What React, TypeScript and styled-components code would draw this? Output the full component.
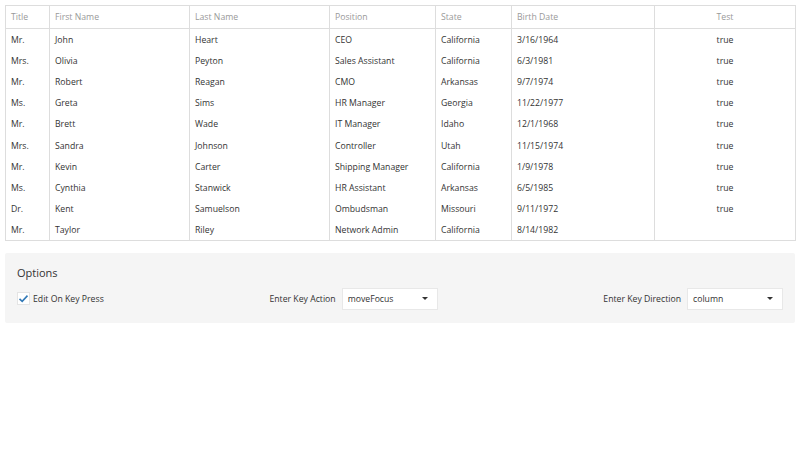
import React, { FC, useState } from 'react';
import styled, { createGlobalStyle } from 'styled-components';

const GlobalStyle = createGlobalStyle`
  *, *::before, *::after {
    box-sizing: border-box;
  }
  html, body {
    margin: 0;
    padding: 0;
    background: #fff;
  }
  body {
    font-family: "Open Sans", "Noto Sans", sans-serif;
    color: #333;
  }
`;

const Page = styled.div`
  padding: 5px 5px 0 5px;
`;

const Grid = styled.table`
  width: 790px;
  border-collapse: collapse;
  table-layout: fixed;
  border: 1px solid #ddd;
  font-size: 8.7px;
`;

const HeadCell = styled.th<{ $w: number; $center?: boolean }>`
  width: ${p => p.$w}px;
  height: 23px;
  padding: 0 5px;
  text-align: ${p => (p.$center ? 'center' : 'left')};
  font-weight: 400;
  color: #999;
  border-left: 1px solid #ddd;
  border-bottom: 1px solid #ddd;
  white-space: nowrap;
  &:first-child {
    border-left: 0;
  }
`;

const Cell = styled.td<{ $center?: boolean }>`
  height: 21.2px;
  padding: 1px 5px 0 5px;
  text-align: ${p => (p.$center ? 'center' : 'left')};
  color: #333;
  border-left: 1px solid #ddd;
  white-space: nowrap;
  &:first-child {
    border-left: 0;
  }
`;

const Options = styled.div`
  width: 790px;
  margin-top: 12px;
  background: #f5f5f5;
  border-radius: 2px;
  padding: 12px 12px 13px 12px;
`;

const OptionsTitle = styled.div`
  font-size: 11px;
  line-height: 16px;
  color: #333;
  margin-bottom: 7px;
`;

const OptionsRow = styled.div`
  display: flex;
  align-items: center;
  justify-content: space-between;
  font-size: 8.7px;
`;

const CheckLabel = styled.label`
  display: flex;
  align-items: center;
  gap: 3px;
  cursor: pointer;
`;

const CheckBox = styled.span`
  width: 13px;
  height: 13px;
  border: 1px solid #e4e4e4;
  background: #fff;
  display: flex;
  align-items: center;
  justify-content: center;
`;

const Option = styled.div`
  display: flex;
  align-items: center;
  gap: 6px;
`;

const SelectBox = styled.div`
  width: 96px;
  height: 22px;
  background: #fff;
  border: 1px solid #e8e8e8;
  display: flex;
  align-items: center;
  justify-content: space-between;
  padding: 0 9px 0 5px;
`;

const Caret = styled.span`
  width: 0;
  height: 0;
  border-left: 3px solid transparent;
  border-right: 3px solid transparent;
  border-top: 3px solid #333;
`;

const columns = [
  { title: 'Title', w: 44 },
  { title: 'First Name', w: 140 },
  { title: 'Last Name', w: 140 },
  { title: 'Position', w: 106 },
  { title: 'State', w: 76 },
  { title: 'Birth Date', w: 143 },
  { title: 'Test', w: 141, center: true },
];

const rows = [
  ['Mr.', 'John', 'Heart', 'CEO', 'California', '3/16/1964', 'true'],
  ['Mrs.', 'Olivia', 'Peyton', 'Sales Assistant', 'California', '6/3/1981', 'true'],
  ['Mr.', 'Robert', 'Reagan', 'CMO', 'Arkansas', '9/7/1974', 'true'],
  ['Ms.', 'Greta', 'Sims', 'HR Manager', 'Georgia', '11/22/1977', 'true'],
  ['Mr.', 'Brett', 'Wade', 'IT Manager', 'Idaho', '12/1/1968', 'true'],
  ['Mrs.', 'Sandra', 'Johnson', 'Controller', 'Utah', '11/15/1974', 'true'],
  ['Mr.', 'Kevin', 'Carter', 'Shipping Manager', 'California', '1/9/1978', 'true'],
  ['Ms.', 'Cynthia', 'Stanwick', 'HR Assistant', 'Arkansas', '6/5/1985', 'true'],
  ['Dr.', 'Kent', 'Samuelson', 'Ombudsman', 'Missouri', '9/11/1972', 'true'],
  ['Mr.', 'Taylor', 'Riley', 'Network Admin', 'California', '8/14/1982', ''],
];

const App: FC = () => {
  const [editOnKeyPress, setEditOnKeyPress] = useState<boolean>(true);

  return (
    <Page>
      <GlobalStyle />
      <Grid>
        <thead>
          <tr>
            {columns.map(col => (
              <HeadCell key={col.title} $w={col.w} $center={col.center}>
                {col.title}
              </HeadCell>
            ))}
          </tr>
        </thead>
        <tbody>
          {rows.map((row, i) => (
            <tr key={i}>
              {row.map((value, j) => (
                <Cell key={j} $center={columns[j].center}>
                  {value}
                </Cell>
              ))}
            </tr>
          ))}
        </tbody>
      </Grid>

      <Options>
        <OptionsTitle>Options</OptionsTitle>
        <OptionsRow>
          <CheckLabel onClick={() => setEditOnKeyPress(!editOnKeyPress)}>
            <CheckBox>
              {editOnKeyPress && (
                <svg width="11" height="11" viewBox="0 0 11 11">
                  <path d="M1.5 5.8 L4.2 8.3 L9.5 2.6" fill="none" stroke="#337ab7" strokeWidth="1.6" />
                </svg>
              )}
            </CheckBox>
            Edit On Key Press
          </CheckLabel>

          <Option>
            Enter Key Action
            <SelectBox>
              moveFocus
              <Caret />
            </SelectBox>
          </Option>

          <Option>
            Enter Key Direction
            <SelectBox>
              column
              <Caret />
            </SelectBox>
          </Option>
        </OptionsRow>
      </Options>
    </Page>
  );
};

export default App;
